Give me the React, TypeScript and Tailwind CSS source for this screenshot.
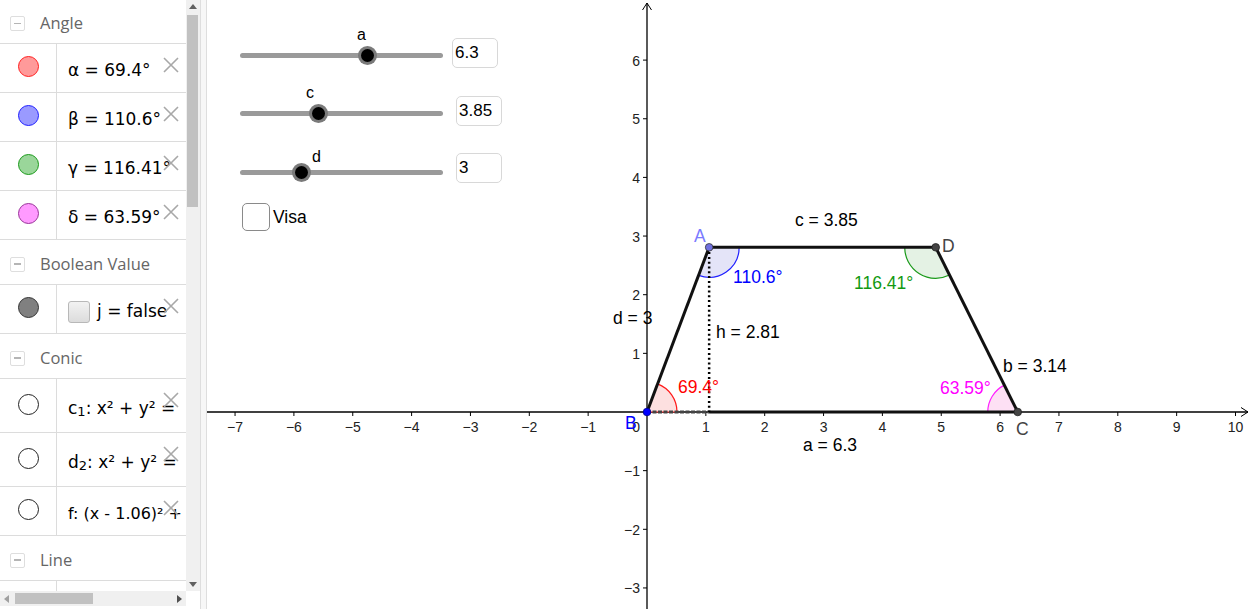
import type { ReactNode } from 'react';

const MATH = '"DejaVu Sans", sans-serif';

// graph coordinates -> page pixels
const OX = 647;
const OY = 412;
const UX = 58.85;
const UY = 58.65;
const px = (x: number) => OX + x * UX;
const py = (y: number) => OY - y * UY;

const A = { x: px(1.056), y: py(2.808) };
const B = { x: px(0), y: py(0) };
const C = { x: px(6.3), y: py(0) };
const D = { x: px(4.906), y: py(2.808) };

const sector = (cx: number, cy: number, r: number, a1: number, a2: number) => {
  const p = (a: number) => [cx + r * Math.cos((a * Math.PI) / 180), cy - r * Math.sin((a * Math.PI) / 180)];
  const [x1, y1] = p(a1);
  const [x2, y2] = p(a2);
  return `M${cx} ${cy} L${x1} ${y1} A${r} ${r} 0 0 0 ${x2} ${y2} Z`;
};

const CloseX = () => (
  <svg className="absolute right-[2px] top-[13px]" width="16" height="16" viewBox="0 0 16 16">
    <path d="M1 1 L15 15 M15 1 L1 15" stroke="#a8a8a8" strokeWidth="1.6" />
  </svg>
);

const Header = ({ title, h }: { title: string; h: string }) => (
  <div className={`flex items-center border-b border-[#dcdcdc] pt-[4px] ${h}`}>
    <div className="ml-[10px] flex h-[15px] w-[15px] items-center justify-center rounded-[2px] border border-[#dedede]">
      <div className="h-[1.5px] w-[7px] bg-[#b5b5b5]" />
    </div>
    <span className="ml-[15px] text-[16.5px] text-[#666]" style={{ fontFamily: '"Open Sans", sans-serif' }}>
      {title}
    </span>
  </div>
);

const Row = ({ dot, h, children }: { dot: string; h: string; children: ReactNode }) => (
  <div className={`flex border-b border-[#dcdcdc] ${h}`}>
    <div className="flex w-[57px] shrink-0 items-center justify-center border-r border-[#dcdcdc] pb-[3px]">
      <div className={`h-[21px] w-[21px] rounded-full border ${dot}`} />
    </div>
    <div
      className="relative mr-[5px] flex min-w-0 flex-1 items-center overflow-hidden whitespace-nowrap pl-[11px] pt-[6px] text-[17px] text-black"
      style={{ fontFamily: MATH }}
    >
      {children}
      <CloseX />
    </div>
  </div>
);

const AlgebraPanel = () => (
  <div className="flex h-full w-[200px] shrink-0 flex-col bg-white">
    <div className="flex h-[591px]">
      <div className="w-[186px] overflow-hidden">
        <Header title="Angle" h="h-[44px]" />
        <Row dot="bg-[#ff9a9a] border-[#ff2020]" h="h-[49px]">α = 69.4°</Row>
        <Row dot="bg-[#9a9aff] border-[#2020ff]" h="h-[49px]">β = 110.6°</Row>
        <Row dot="bg-[#9ad69a] border-[#1a9a1a]" h="h-[49px]">γ = 116.41°</Row>
        <Row dot="bg-[#ff9aff] border-[#993399]" h="h-[49px]">δ = 63.59°</Row>
        <Header title="Boolean Value" h="h-[45px]" />
        <Row dot="bg-[#808080] border-[#333]" h="h-[49px]">
          <span className="mr-[7px] inline-block h-[22px] w-[22px] shrink-0 rounded-[3px] border border-[#b8b8b8] bg-gradient-to-b from-[#f2f2f2] to-[#dcdcdc]" />
          j = false
        </Row>
        <Header title="Conic" h="h-[45px]" />
        <Row dot="bg-white border-[#222]" h="h-[54px]">
          c<sub className="text-[13px]">1</sub>: x² + y² = 7.9
        </Row>
        <Row dot="bg-white border-[#222]" h="h-[54px]">
          d<sub className="text-[13px]">2</sub>: x² + y² = 9
        </Row>
        <Row dot="bg-white border-[#222]" h="h-[49px]">
          <span className="text-[16px]">f: (x - 1.06)² + (y - 2.81)²</span>
        </Row>
        <Header title="Line" h="h-[45px]" />
        <div className="flex h-[20px]">
          <div className="w-[57px] border-r border-[#dcdcdc]" />
        </div>
      </div>
      <div className="relative w-[14px] bg-[#f0f0f0]">
        <div className="absolute left-[3px] top-[4px] h-0 w-0 border-x-[4px] border-b-[5px] border-x-transparent border-b-[#606060]" />
        <div className="absolute left-[1px] top-[15px] h-[192px] w-[11px] bg-[#c1c1c1]" />
        <div className="absolute bottom-[4px] left-[3px] h-0 w-0 border-x-[4px] border-t-[5px] border-x-transparent border-t-[#606060]" />
      </div>
    </div>
    <div className="flex h-[15px]">
      <div className="relative w-[186px] bg-[#f0f0f0]">
        <div className="absolute left-[4px] top-[4px] h-0 w-0 border-y-[4px] border-r-[5px] border-y-transparent border-r-[#a0a0a0]" />
        <div className="absolute left-[15px] top-[2px] h-[11px] w-[78px] bg-[#c1c1c1]" />
        <div className="absolute right-[4px] top-[4px] h-0 w-0 border-y-[4px] border-l-[5px] border-y-transparent border-l-[#505050]" />
      </div>
      <div className="w-[14px] bg-white" />
    </div>
  </div>
);

const Slider = ({
  top,
  knob,
  label,
  labelX,
  labelTop,
  boxLeft,
  boxTop,
  value,
}: {
  top: number;
  knob: number;
  label: string;
  labelX: number;
  labelTop: number;
  boxLeft: number;
  boxTop: number;
  value: string;
}) => (
  <>
    <div className="absolute left-[33px] h-[5px] w-[203px] rounded-full bg-[#9a9a9a]" style={{ top: top - 2.5 }} />
    <div
      className="absolute flex h-[19px] w-[19px] items-center justify-center rounded-full bg-[#7a7a7a]"
      style={{ left: knob - 9.5, top: top - 9.5 }}
    >
      <div className="h-[13px] w-[13px] rounded-full bg-black" />
    </div>
    <span className="absolute text-[16px] leading-none text-black" style={{ left: labelX, top: labelTop }}>
      {label}
    </span>
    <div
      className="absolute flex h-[30px] w-[46px] items-center rounded-[5px] border border-[#d8d8d8] bg-white pl-[2px] text-[17px] text-black"
      style={{ left: boxLeft, top: boxTop }}
    >
      {value}
    </div>
  </>
);

const Graph = () => {
  const xs = [-7, -6, -5, -4, -3, -2, -1, 1, 2, 3, 4, 5, 6, 7, 8, 9, 10];
  const ys = [-3, -2, -1, 1, 2, 3, 4, 5, 6];
  const foot = px(1.056);
  return (
    <div className="relative flex-1 overflow-hidden bg-white" style={{ fontFamily: '"Liberation Sans", Arial, sans-serif' }}>
      <svg className="absolute inset-0" width="1043" height="609" viewBox="207 0 1043 609">
        <g fontFamily='"Liberation Sans", Arial, sans-serif'>
          {/* axes */}
          <line x1="207" y1={OY} x2="1248" y2={OY} stroke="#000" strokeWidth="1.3" />
          <path d={`M1241 ${OY - 4.5} L1248 ${OY} L1241 ${OY + 4.5}`} fill="none" stroke="#000" strokeWidth="1" />
          <line x1={OX} y1="3" x2={OX} y2="609" stroke="#000" strokeWidth="1.3" />
          <path d={`M${OX - 4.5} 10 L${OX} 3 L${OX + 4.5} 10`} fill="none" stroke="#000" strokeWidth="1" />
          {xs.map((i) => (
            <g key={`x${i}`}>
              <line x1={px(i)} y1={OY} x2={px(i)} y2={OY + 4} stroke="#000" strokeWidth="1" />
              <text x={px(i)} y="431.5" fontSize="14" textAnchor="middle" fill="#222">
                {i < 0 ? `−${-i}` : i}
              </text>
            </g>
          ))}
          {ys.map((i) => (
            <g key={`y${i}`}>
              <line x1={OX - 4} y1={py(i)} x2={OX} y2={py(i)} stroke="#000" strokeWidth="1" />
              <text x="640" y={py(i) + 5.5} fontSize="14" textAnchor="end" fill="#222">
                {i < 0 ? `−${-i}` : i}
              </text>
            </g>
          ))}
          <text x="640" y="431.5" fontSize="14" textAnchor="end" fill="#222">
            0
          </text>

          {/* angle sectors */}
          <path d={sector(B.x, B.y, 30, 0, 69.4)} fill="#fde0e0" stroke="#ff1a1a" strokeWidth="1.2" />
          <path d={sector(A.x, A.y, 30, 249.4, 360)} fill="#e4e4f8" stroke="#2020ff" strokeWidth="1.2" />
          <path d={sector(D.x, D.y, 31, 180, 296.41)} fill="#e4f2e4" stroke="#1a9a1a" strokeWidth="1.2" />
          <path d={sector(C.x, C.y, 30, 116.41, 180)} fill="#fde0f4" stroke="#ff20ff" strokeWidth="1.2" />

          {/* trapezoid */}
          <line x1={B.x} y1={B.y} x2={foot} y2={OY} stroke="#444" strokeWidth="3" strokeDasharray="4 1.5" />
          <line x1={foot} y1={OY} x2={C.x} y2={C.y} stroke="#111" strokeWidth="3" />
          <line x1={C.x} y1={C.y} x2={D.x} y2={D.y} stroke="#111" strokeWidth="3" />
          <line x1={D.x} y1={D.y} x2={A.x} y2={A.y} stroke="#111" strokeWidth="3" />
          <line x1={A.x} y1={A.y} x2={B.x} y2={B.y} stroke="#111" strokeWidth="3" />
          <line x1={A.x} y1={A.y} x2={foot} y2={OY} stroke="#000" strokeWidth="2.5" strokeDasharray="2 2.8" />

          {/* points */}
          <circle cx={A.x} cy={A.y} r="3.8" fill="#7070e0" stroke="#333" strokeWidth="0.8" />
          <circle cx={B.x} cy={B.y} r="3.8" fill="#0000ff" stroke="#00008a" strokeWidth="0.8" />
          <circle cx={C.x} cy={C.y} r="3.8" fill="#444" stroke="#222" strokeWidth="0.8" />
          <circle cx={D.x} cy={D.y} r="3.8" fill="#444" stroke="#222" strokeWidth="0.8" />

          {/* labels */}
          <g fontSize="17.5">
            <text x="694" y="242" fill="#7b7bff">A</text>
            <text x="625" y="429" fill="#0000ff">B</text>
            <text x="1016" y="435" fill="#444">C</text>
            <text x="942" y="252" fill="#444">D</text>
            <text x="795" y="226" fill="#000">c = 3.85</text>
            <text x="613" y="324" fill="#000">d = 3</text>
            <text x="716" y="338" fill="#000">h = 2.81</text>
            <text x="1003" y="372" fill="#000">b = 3.14</text>
            <text x="803" y="451" fill="#000">a = 6.3</text>
            <text x="678" y="393" fill="#ff0000">69.4°</text>
            <text x="733" y="283" fill="#0000ff">110.6°</text>
            <text x="854" y="289" fill="#119911">116.41°</text>
            <text x="940" y="394" fill="#ff00ff">63.59°</text>
          </g>
        </g>
      </svg>

      {/* sliders on the canvas (page x − 207) */}
      <Slider top={55.5} knob={160} label="a" labelX={150} labelTop={27} boxLeft={245} boxTop={38} value="6.3" />
      <Slider top={113.5} knob={111} label="c" labelX={99} labelTop={85} boxLeft={249} boxTop={96} value="3.85" />
      <Slider top={172} knob={94} label="d" labelX={105} labelTop={149} boxLeft={249} boxTop={153} value="3" />
      <div className="absolute left-[35px] top-[203px] flex items-center">
        <div className="h-[28px] w-[28px] rounded-[5px] border-[1.5px] border-[#8a8a8a] bg-white" />
        <span className="ml-[3px] text-[17.5px] text-black">Visa</span>
      </div>
    </div>
  );
};

export default function App() {
  return (
    <div className="flex h-[609px] w-[1250px] overflow-hidden bg-white">
      <AlgebraPanel />
      <div className="w-[7px] shrink-0 border-x border-[#dedede] bg-[#f7f7f7]" />
      <Graph />
    </div>
  );
}
